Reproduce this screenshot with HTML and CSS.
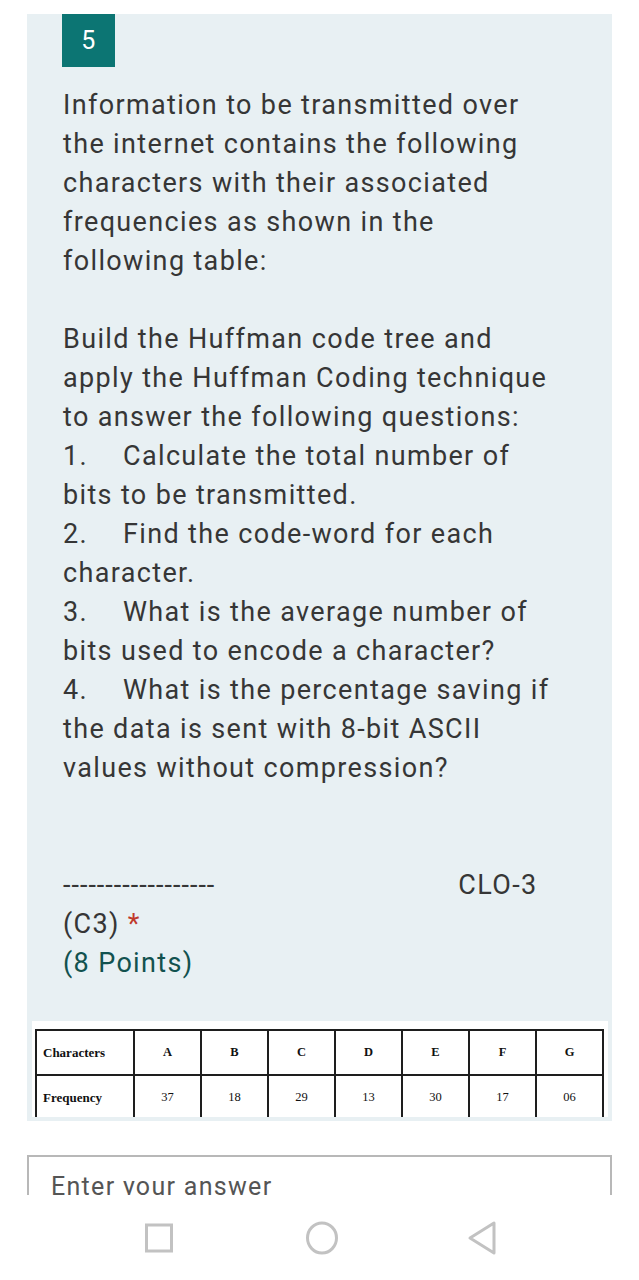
FILE: index.html
```html
<!DOCTYPE html>
<html>
<head>
<meta charset="utf-8">
<link rel="stylesheet" href="styles.css">
</head>
<body>
<div class="screen">
  <main class="main">
    <section class="card">
      <div class="badge">5</div>
      <div class="question">
        <p>Information to be transmitted over<br>the internet contains the following<br>characters with their associated<br>frequencies as shown in the<br>following table:</p>
        <p class="blank">&nbsp;</p>
        <p>Build the Huffman code tree and<br>apply the Huffman Coding technique<br>to answer the following questions:<br><span class="num">1.</span>Calculate the total number of<br>bits to be transmitted.<br><span class="num">2.</span>Find the code-word for each<br>character.<br><span class="num">3.</span>What is the average number of<br>bits used to encode a character?<br><span class="num">4.</span>What is the percentage saving if<br>the data is sent with 8-bit ASCII<br>values without compression?</p>
        <p class="blank">&nbsp;</p>
        <p class="blank">&nbsp;</p>
        <div class="clo-row"><span class="dashes">------------------</span><span class="clo">CLO-3</span></div>
        <p>(C3) <span class="req">*</span></p>
        <p class="points">(8 Points)</p>
      </div>
      <div class="table-wrap">
        <table class="freq">
          <tr>
            <th class="first">Characters</th><th>A</th><th>B</th><th>C</th><th>D</th><th>E</th><th>F</th><th>G</th>
          </tr>
          <tr>
            <th class="first">Frequency</th><td>37</td><td>18</td><td>29</td><td>13</td><td>30</td><td>17</td><td>06</td>
          </tr>
        </table>
      </div>
    </section>
    <div class="answer">
      <span class="placeholder">Enter your answer</span>
    </div>
  </main>
  <nav class="navbar">
    <svg class="nav-icon" width="32" height="34" viewBox="0 0 32 34"><rect x="3.5" y="4" width="25" height="26" fill="none" stroke="#c2c2c2" stroke-width="3"/></svg>
    <svg class="nav-icon" width="36" height="36" viewBox="0 0 36 36"><ellipse cx="18" cy="18" rx="14.5" ry="15" fill="none" stroke="#c2c2c2" stroke-width="3"/></svg>
    <svg class="nav-icon" width="32" height="36" viewBox="0 0 32 36"><path d="M28 3 L28 33 L4 18 Z" fill="none" stroke="#c2c2c2" stroke-width="3" stroke-linejoin="round"/></svg>
  </nav>
</div>
</body>
</html>
```
FILE: styles.css
```css
* { box-sizing: border-box; }
html, body { margin: 0; padding: 0; background: #ffffff; }
body { font-family: Roboto, "Liberation Sans", sans-serif; color: #363636; }

.screen { width: 639px; height: 1280px; display: flex; flex-direction: column; overflow: hidden; }
.main { height: 1195px; overflow: hidden; padding-top: 14px; }

.card {
  margin: 0 27px 0 27px;
  width: 585px;
  background: #e8f0f3;
  padding-bottom: 4px;
}
.badge {
  margin-left: 35px;
  width: 53px;
  height: 53px;
  background: #0c7573;
  color: #ffffff;
  font-size: 25px;
  letter-spacing: 0.5px;
  display: flex;
  align-items: center;
  justify-content: center;
}
.question {
  margin-top: 19px;
  padding-left: 36px;
  font-size: 27px;
  letter-spacing: 1.35px;
  line-height: 39px;
}
.question p { margin: 0; white-space: nowrap; }
.num { display: inline-block; width: 60px; }
.clo-row { display: flex; white-space: nowrap; }
.dashes { letter-spacing: 1px; }
.clo { margin-left: 243px; }
.req { color: #c0392b; }
.points { color: #12524f; }

.table-wrap {
  margin: 38px 0 0 5px;
  width: 576px;
  height: 96px;
  background: #ffffff;
  padding: 8px 0 0 3px;
  overflow: hidden;
}
.freq {
  border-collapse: collapse;
  font-family: "Liberation Serif", "Times New Roman", serif;
  font-size: 12.5px;
  color: #111;
  table-layout: fixed;
  width: 569px;
}
.freq th, .freq td {
  border: 2px solid #1e1e1e;
  height: 45px;
  width: 67px;
  text-align: center;
  padding: 0;
}
.freq td { font-weight: normal; }
.freq th.first { width: 98px; text-align: left; padding-left: 6px; font-size: 13px; }

.answer {
  margin: 34px 0 0 27px;
  width: 585px;
  height: 80px;
  border: 2px solid #b8b8b8;
  padding: 15px 0 0 22px;
  font-size: 25px;
  letter-spacing: 1.3px;
  line-height: 29px;
}
.placeholder { color: #555555; }

.navbar {
  height: 85px;
  background: #ffffff;
  display: flex;
  align-items: center;
}
.nav-icon { flex: none; }
.navbar .nav-icon:nth-child(1) { margin-left: 143px; }
.navbar .nav-icon:nth-child(2) { margin-left: 129px; }
.navbar .nav-icon:nth-child(3) { margin-left: 126px; }
```
